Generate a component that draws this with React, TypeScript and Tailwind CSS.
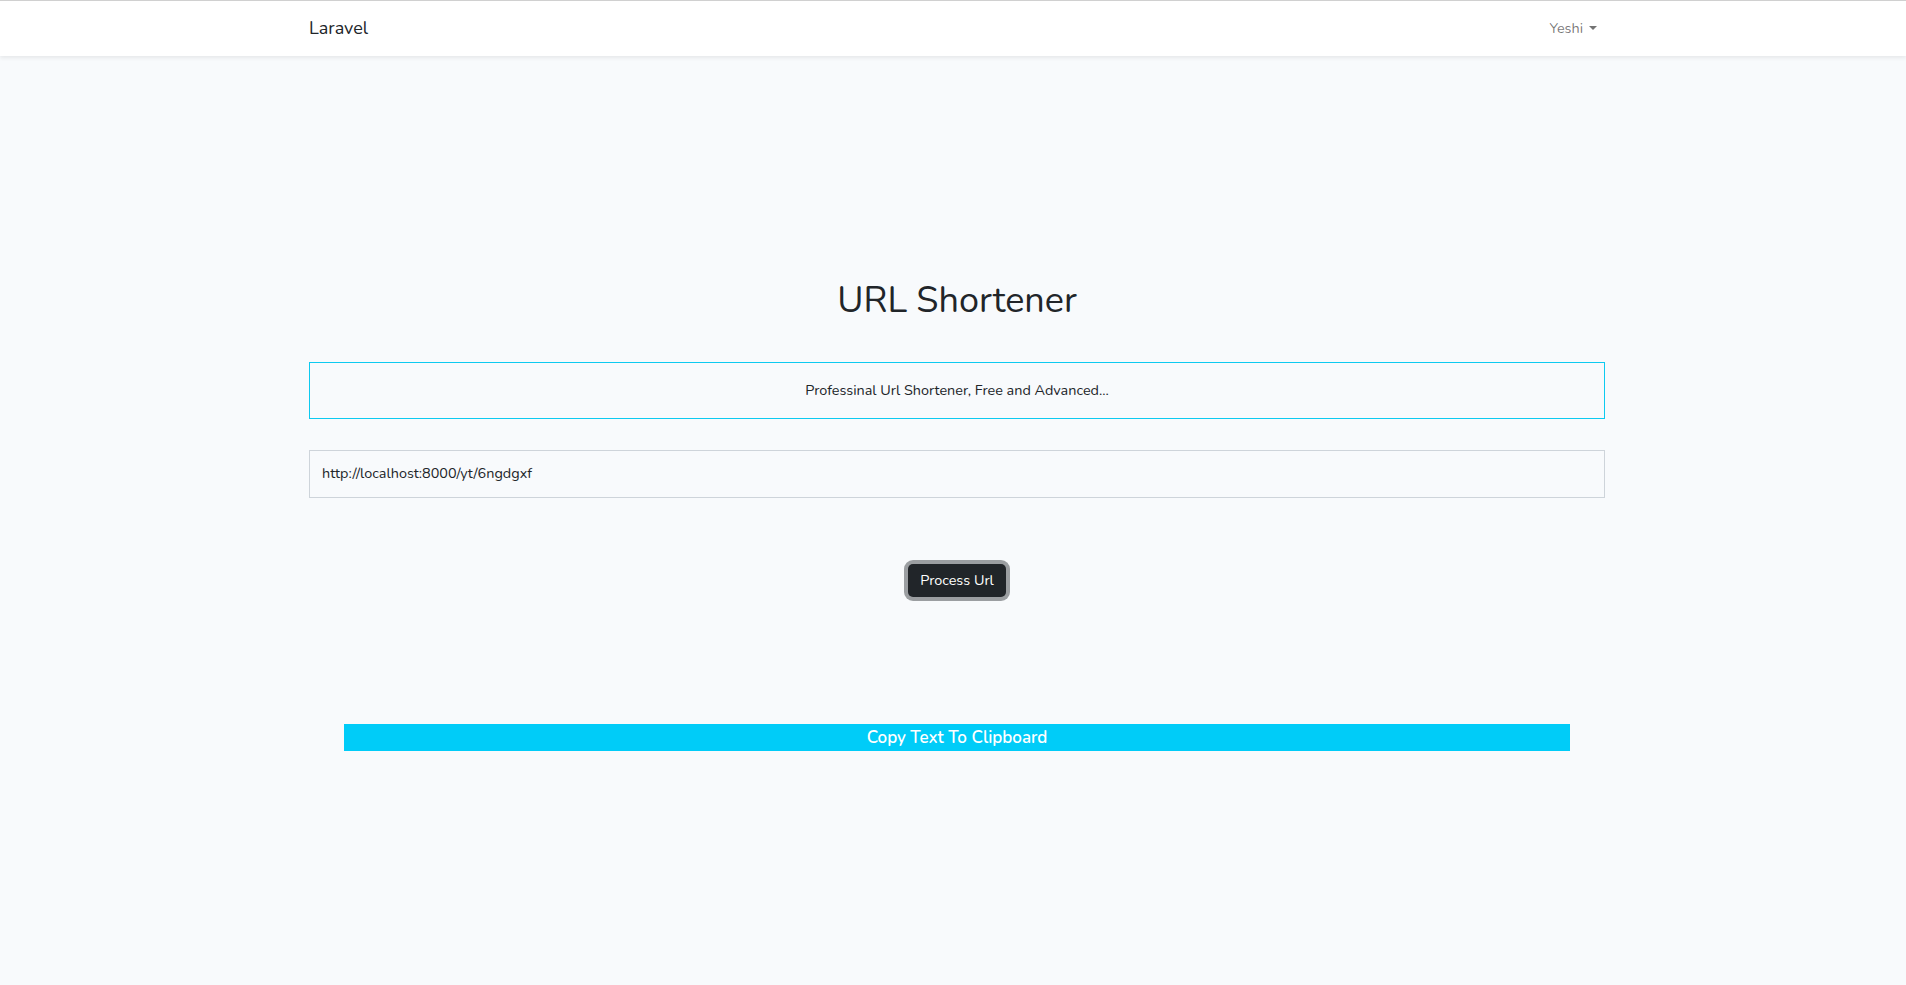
import React from "react";

export default function App() {
  return (
    <div className="min-h-screen bg-[#f8fafc] font-['Nunito','Lato',sans-serif] text-[#212529]">
      {/* navbar */}
      <nav className="h-[56px] border-t border-[#d0d0d0] bg-white shadow-[0_2px_4px_rgba(0,0,0,0.075)]">
        <div className="pl-2">
          <div className="mx-auto flex h-[55px] w-[1296px] items-center justify-between">
            <a className="text-[18px] leading-[27px] text-[#212529]">Laravel</a>
            <a className="flex items-center pr-2 text-[14.4px] text-black/55">
              Yeshi
              <span className="ml-[6px] h-0 w-0 border-x-[4px] border-t-[4.5px] border-x-transparent border-t-black/55" />
            </a>
          </div>
        </div>
      </nav>

      <div className="pl-2">
        <main className="mx-auto w-[1296px]">
          <h1 className="mt-[223px] text-center text-[36px] leading-[43px] font-normal">
            URL Shortener
          </h1>

          <div className="mt-[40px] flex h-[57px] items-center justify-center border border-[#0dcaf0] text-[14.4px]">
            Professinal Url Shortener, Free and Advanced...
          </div>

          <div className="mt-[31px] flex h-[48px] items-center border border-[#ced4da] bg-[#f8fafc] pl-3 text-[14.4px]">
            http://localhost:8000/yt/6ngdgxf
          </div>

          <div className="mt-[66px] flex justify-center">
            <button className="h-[33px] w-[98px] rounded-[5px] bg-[#212529] text-[14.4px] text-white ring-[4px] ring-[#9b9ea1]">
              Process Url
            </button>
          </div>

          <div className="mx-[35px] mt-[127px] flex h-[27px] items-center justify-center bg-[#00ccf8] text-[17px] font-semibold text-white">
            Copy Text To Clipboard
          </div>
        </main>
      </div>
    </div>
  );
}
